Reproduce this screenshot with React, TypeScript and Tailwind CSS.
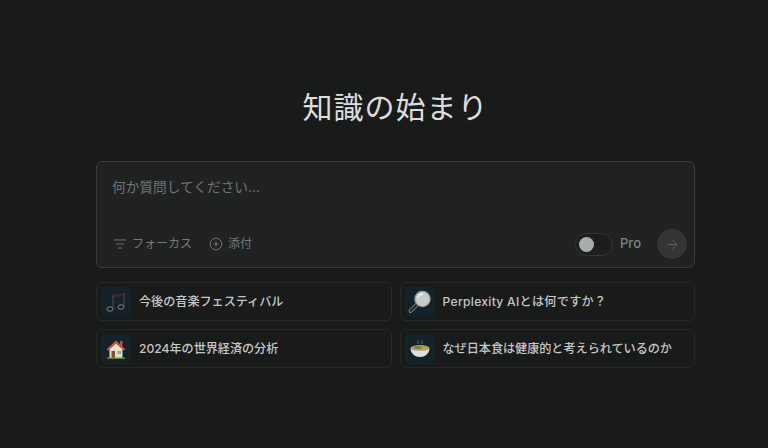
import React from 'react';
import { ArrowRight, CirclePlus, ListFilter } from 'lucide-react';

const MusicIcon = () => (
  <svg width="24" height="24" viewBox="0 0 24 24" fill="none">
    <path d="M9 5 L20 2.5 L20 5.5 L9 8 Z" fill="#33282d" />
    <path d="M9 5 L9 18.5M20 3 L20 16.5" stroke="#434347" strokeWidth="1.3" />
    <ellipse cx="6" cy="19" rx="3" ry="2.2" fill="#15181a" stroke="#85898b" strokeWidth="1" />
    <ellipse cx="17" cy="17" rx="3" ry="2.2" fill="#15181a" stroke="#85898b" strokeWidth="1" />
  </svg>
);

const MagnifierIcon = () => (
  <svg width="26" height="26" viewBox="0 0 26 26" fill="none">
    <path d="M10 15.5 L3.5 22" stroke="#aeb1b3" strokeWidth="3.6" strokeLinecap="round" />
    <path d="M10 15.5 L3.5 22" stroke="#1d1d1f" strokeWidth="2.4" strokeLinecap="round" />
    <circle cx="15.5" cy="10" r="7.6" fill="#c8cbcd" stroke="#9a9ea1" strokeWidth="1.2" />
    <path d="M11 8.5 A5 5 0 0 1 15.5 5" stroke="#eef0f0" strokeWidth="1.4" strokeLinecap="round" />
  </svg>
);

const HouseIcon = () => (
  <svg width="22" height="22" viewBox="0 0 22 22" fill="none">
    <rect x="15" y="3" width="2.5" height="5" fill="#a8563f" />
    <rect x="4.5" y="10" width="13" height="10" fill="#e8dcc0" />
    <path d="M1.5 11.5 L11 2.5 L20.5 11.5 L18.5 12.5 L11 5.5 L3.5 12.5 Z" fill="#c9583f" />
    <path d="M11 5.5 L4.5 11.5 L17.5 11.5 Z" fill="#efe4c9" />
    <rect x="6.5" y="13" width="3.5" height="7" fill="#8a4a35" />
    <rect x="12.5" y="13" width="3.5" height="3" fill="#6fb2d6" />
    <rect x="2" y="19.5" width="18" height="1.3" fill="#6f9a4d" />
  </svg>
);

const BowlIcon = () => (
  <svg width="24" height="24" viewBox="0 0 24 24" fill="none">
    <path d="M10 3.5 C9 5 11 5.5 10 7M14 3.5 C13 5 15 5.5 14 7" stroke="#62666a" strokeWidth="1" />
    <ellipse cx="12" cy="11" rx="9.5" ry="3" fill="#b6a05a" />
    <ellipse cx="10" cy="10.5" rx="4" ry="1.4" fill="#5d8a3f" />
    <path d="M2.5 11.5 C3 17 7 20 12 20 C17 20 21 17 21.5 11.5 C18 14.5 6 14.5 2.5 11.5 Z" fill="#dfe1e0" />
  </svg>
);

const suggestions = [
  { id: 'music', icon: <MusicIcon />, text: '今後の音楽フェスティバル', spacing: 'tracking-normal' },
  { id: 'ai', icon: <MagnifierIcon />, text: 'Perplexity AIとは何ですか？', spacing: 'tracking-[0.3px]' },
  { id: 'economy', icon: <HouseIcon />, text: '2024年の世界経済の分析', spacing: 'tracking-normal' },
  { id: 'food', icon: <BowlIcon />, text: 'なぜ日本食は健康的と考えられているのか', spacing: 'tracking-normal' },
];

const App: React.FC = () => {
  return (
    <div className="h-[448px] w-[768px] overflow-hidden bg-[#191a1a] pt-[86px] pl-[96px] font-['Inter','Noto_Sans_CJK_JP',sans-serif]">
      <div className="w-[599px]">
        <h1 className="text-center text-[30px] leading-[42px] font-normal tracking-[1px] text-[#dcdddd]">知識の始まり</h1>

        {/* Search box */}
        <div className="mt-[33px] flex h-[107px] flex-col justify-between rounded-md border border-[#3a3c3c] bg-[#202222] pt-[14px] pr-[7px] pb-2 pl-[15px]">
          <p className="text-[13.7px] leading-[22px] text-[#727575]">何か質問してください...</p>
          <div className="flex items-center justify-between">
            <div className="flex items-center gap-[17px] pl-[1px] text-[12px] text-[#777a7a]">
              <div className="flex items-center gap-[5px]">
                <ListFilter size={14} strokeWidth={1.6} />
                <span>フォーカス</span>
              </div>
              <div className="flex items-center gap-[5px]">
                <CirclePlus size={14} strokeWidth={1.6} />
                <span>添付</span>
              </div>
            </div>
            <div className="flex items-center">
              <div className="flex h-[23px] w-[38px] items-center rounded-full border border-[#353737] bg-[#1c1d1d] pl-[3px]">
                <div className="h-[15px] w-[15px] rounded-full bg-[#a9acae]" />
              </div>
              <span className="ml-[7px] text-[13px] font-medium text-[#7f8282]">Pro</span>
              <div className="ml-4 flex h-[30px] w-[30px] items-center justify-center rounded-full bg-[#333535] text-[#5f6262]">
                <ArrowRight size={15} strokeWidth={1.6} />
              </div>
            </div>
          </div>
        </div>

        {/* Suggestions */}
        <div className="mt-[14px] grid grid-cols-2 gap-x-2 gap-y-2">
          {suggestions.map(item => (
            <div key={item.id} className="flex h-[39px] items-center gap-2 rounded-md border border-[#272929] bg-[#191a1a] pl-1">
              <div className="flex h-[30px] w-[30px] items-center justify-center rounded-md bg-[#15222a]">
                {item.icon}
              </div>
              <span className={`pt-0.5 text-[12.1px] font-medium text-[#c6c8c8] ${item.spacing}`}>{item.text}</span>
            </div>
          ))}
        </div>
      </div>
    </div>
  );
};

export default App;
